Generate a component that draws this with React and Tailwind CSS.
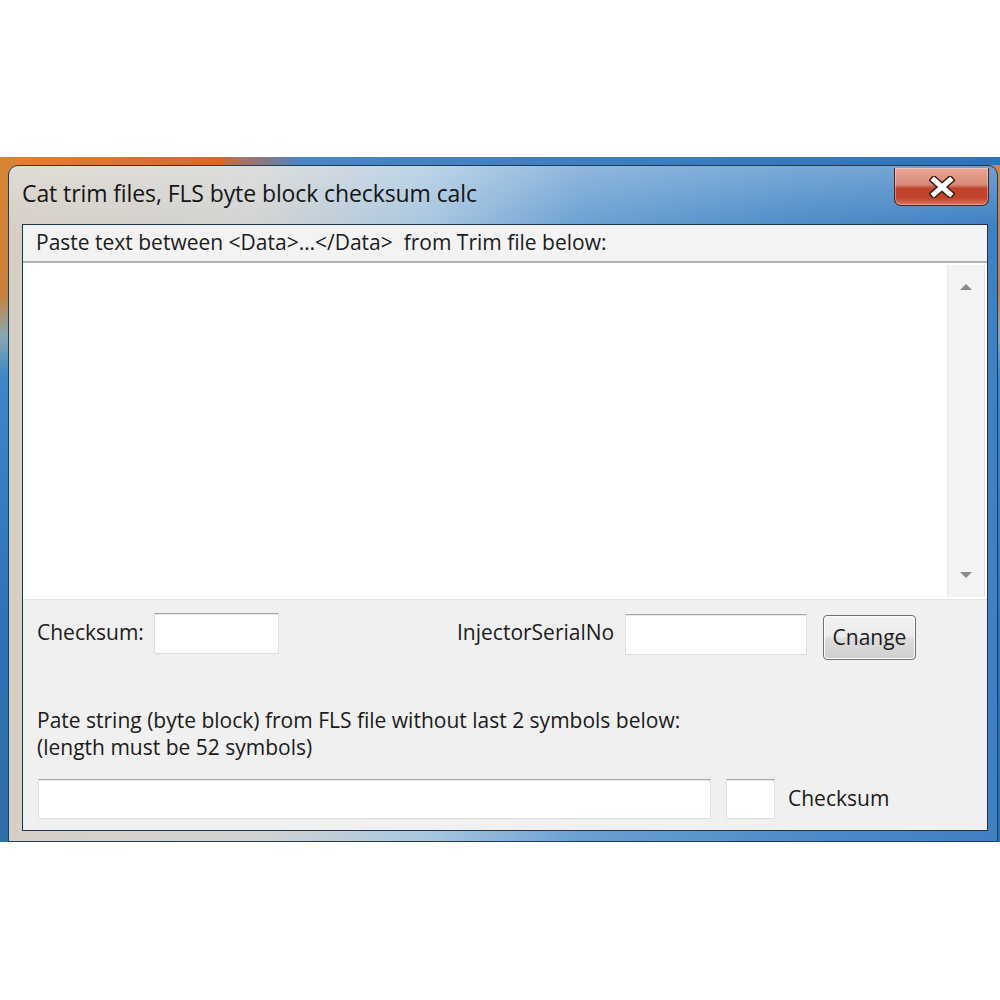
const Field = ({ className }) => (
  <div
    className={
      "bg-white border border-[#dedede] border-t-[#a8a8a8] shadow-[inset_0_1px_0_#e8e8e8] " +
      className
    }
  />
);

const App = () => {
  return (
    <div className="w-[1000px] h-[1000px] bg-white font-['Open_Sans','Noto_Sans',sans-serif] text-[#1b1b1b] overflow-hidden">
      <div className="h-[157px]" />
      {/* desktop behind the window */}
      <div className="h-[685px] flex flex-col bg-[linear-gradient(180deg,#d98535_0%,#c9803d_20%,#8ba7b0_26%,#3c88c6_32%,#2c73b4_70%,#2f6ea8_100%)]">
        <div className="h-[8px] shrink-0 bg-[linear-gradient(90deg,#d98535_0%,#cf6a35_22%,#4a86c6_30%,#2f72b9_100%)]" />
        <div className="flex-1 flex pl-[8px] pr-[2px]">
          <div className="flex-1 rounded-t-[10px] border border-[#213a55] flex flex-col pl-[13px] pr-[9px] pb-[10px] bg-[linear-gradient(180deg,rgba(255,255,255,0.25)_0%,rgba(255,255,255,0)_9%),linear-gradient(90deg,#d6cfc6_0%,#d2d3d2_25%,#a9c7e0_42%,#6aa0d2_58%,#4d8cc9_80%,#3f80c2_100%)]">
            {/* title bar */}
            <div className="h-[58px] flex items-start justify-between shrink-0">
              <span className="mt-[12px] text-[23px] leading-[31px] tracking-[-0.1px] text-[#151515]">
                Cat trim files, FLS byte block checksum calc
              </span>
              <div className="mt-[2px] -mr-[1px] w-[95px] h-[38px] rounded-b-[7px] border border-[#4a2420] border-t-0 flex items-center justify-center bg-[linear-gradient(180deg,#e7a797_0%,#d98a76_45%,#c0432b_55%,#c2432c_80%,#d8745a_100%)] shadow-[inset_0_0_0_1px_rgba(255,255,255,0.35)]">
                <svg width="26" height="22" viewBox="0 0 26 22">
                  <path d="M5 4 L21 18 M21 4 L5 18" stroke="#3b1a16" strokeWidth="8" strokeLinecap="square" />
                  <path d="M5 4 L21 18 M21 4 L5 18" stroke="#ffffff" strokeWidth="5" strokeLinecap="square" />
                </svg>
              </div>
            </div>

            {/* client area */}
            <div className="flex-1 border border-[#1f344c] bg-[#f0f0f0] flex flex-col">
              <div className="h-[38px] shrink-0 flex items-center pl-[13px] text-[21px] border-b-2 border-[#b4b4b4] bg-[#f3f3f3]">
                Paste text between &lt;Data&gt;…&lt;/Data&gt;&nbsp; from Trim file below:
              </div>
              <div className="h-[337px] shrink-0 bg-white flex border-b border-[#e4e4e4]">
                <div className="flex-1" />
                <div className="w-[38px] my-[2px] mr-[2px] bg-[#f3f3f3] border-x border-[#e6e6e6] flex flex-col items-center justify-between py-[18px]">
                  <svg width="14" height="8" viewBox="0 0 14 8">
                    <path d="M1 7 L7 1 L13 7 Z" fill="#8a8a8a" />
                  </svg>
                  <svg width="14" height="8" viewBox="0 0 14 8">
                    <path d="M1 1 L13 1 L7 7 Z" fill="#8a8a8a" />
                  </svg>
                </div>
              </div>

              <div className="flex items-start pl-[14px] pt-[13px] h-[72px] shrink-0 text-[21px]">
                <span className="mt-[4px] w-[117px] leading-[30px]">Checksum:</span>
                <Field className="w-[125px] h-[41px] border-[#b9c6d6] border-t-[#9fb0c4]" />
                <span className="ml-[178px] mt-[4px] w-[168px] leading-[30px]">InjectorSerialNo</span>
                <Field className="w-[182px] h-[41px] mt-[1px]" />
                <button className="ml-[16px] mt-[2px] w-[93px] h-[45px] rounded-[4px] border border-[#6f6f6f] text-[21px] flex items-center justify-center bg-[linear-gradient(180deg,#f3f3f3_0%,#ebebeb_48%,#dcdcdc_52%,#cfcfcf_100%)] shadow-[inset_0_0_0_1px_#fbfbfb]">
                  Cnange
                </button>
              </div>

              <div className="pl-[14px] pt-[35px] text-[21px] leading-[27px] shrink-0">
                <div>Pate string (byte block) from FLS file without last 2 symbols below:</div>
                <div>(length must be 52 symbols)</div>
              </div>

              <div className="flex items-center pl-[15px] pt-[18px] text-[21px] shrink-0">
                <Field className="w-[673px] h-[40px]" />
                <Field className="ml-[15px] w-[49px] h-[40px]" />
                <span className="ml-[13px]">Checksum</span>
              </div>
            </div>
          </div>
        </div>
      </div>
    </div>
  );
};

export default App;
